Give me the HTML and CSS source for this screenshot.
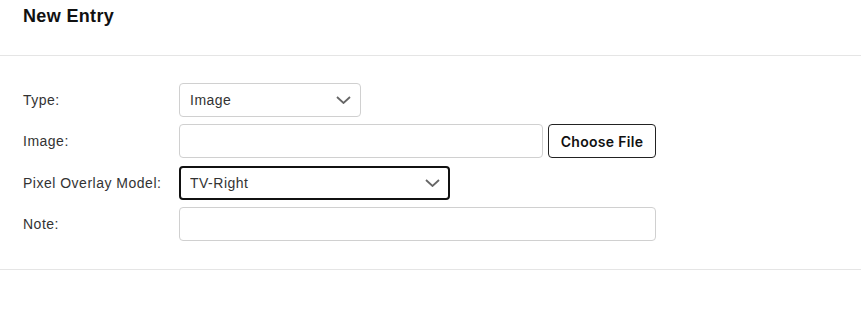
FILE: index.html
```html
<!DOCTYPE html>
<html lang="en">
<head>
    <meta charset="UTF-8">
    <meta name="viewport" content="width=device-width, initial-scale=1.0">
    <title>New Entry</title>
    <link rel="stylesheet" href="styles.css">
</head>
<body>
    <div class="modal">
        <div class="modal-header">
            <h4>New Entry</h4>
        </div>

        <div class="modal-body">
            <form class="entry-form">
                <label for="type">Type:</label>
                <div class="field">
                    <div class="select-wrap type-select">
                        <select id="type">
                            <option>Image</option>
                        </select>
                        <svg class="chevron" width="15" height="8" viewBox="0 0 15 8"><path d="M1 1 L7.5 7 L14 1" fill="none" stroke="#666" stroke-width="1.8"/></svg>
                    </div>
                </div>

                <label for="image">Image:</label>
                <div class="field">
                    <input type="text" id="image" class="text-input image-input">
                    <button type="button" class="file-btn">Choose File</button>
                </div>

                <label for="model">Pixel Overlay Model:</label>
                <div class="field">
                    <div class="select-wrap model-select">
                        <select id="model" class="focused">
                            <option>TV-Right</option>
                        </select>
                        <svg class="chevron" width="15" height="8" viewBox="0 0 15 8"><path d="M1 1 L7.5 7 L14 1" fill="none" stroke="#666" stroke-width="1.8"/></svg>
                    </div>
                </div>

                <label for="note">Note:</label>
                <div class="field">
                    <input type="text" id="note" class="text-input note-input">
                </div>
            </form>
        </div>

        <div class="modal-footer"></div>
    </div>
</body>
</html>
```

FILE: styles.css
```css
body {
    margin: 0;
    background-color: #fff;
    font-family: 'Liberation Sans', Arial, sans-serif;
    color: #333;
}

.modal-header {
    height: 55px;
    border-bottom: 1px solid #e5e5e5;
    padding: 0 23px;
}

.modal-header h4 {
    margin: 0;
    padding-top: 5px;
    font-size: 18px;
    line-height: 22px;
    font-weight: bold;
    letter-spacing: 0.35px;
    color: #111;
}

.modal-body {
    padding: 27px 22px 28px 23px;
}

.modal-footer {
    border-top: 1px solid #e5e5e5;
}

.entry-form {
    display: grid;
    grid-template-columns: 156px auto;
    row-gap: 7.34px;
    align-items: center;
}

.entry-form label {
    font-size: 14px;
    letter-spacing: 0.5px;
    color: #333;
}

.field {
    display: flex;
    align-items: center;
    gap: 5px;
    height: 34px;
}

.select-wrap {
    position: relative;
    height: 34px;
}

.type-select {
    width: 182px;
}

.model-select {
    width: 271px;
}

.select-wrap select {
    appearance: none;
    -webkit-appearance: none;
    width: 100%;
    height: 100%;
    box-sizing: border-box;
    border: 1px solid #d0d0d0;
    border-radius: 4px;
    background: #fff;
    padding: 0 10px;
    font-family: 'Liberation Sans', Arial, sans-serif;
    font-size: 14px;
    letter-spacing: 0.5px;
    color: #333;
    outline: none;
}

.select-wrap select.focused {
    border: 2px solid #111;
    padding: 0 9px;
}

.chevron {
    position: absolute;
    right: 10px;
    top: 13px;
    pointer-events: none;
}

.text-input {
    height: 34px;
    box-sizing: border-box;
    border: 1px solid #d0d0d0;
    border-radius: 4px;
    padding: 0 10px;
    font-size: 14px;
    outline: none;
}

.image-input {
    width: 364px;
}

.note-input {
    width: 477px;
}

.file-btn {
    width: 108px;
    height: 34px;
    box-sizing: border-box;
    border: 1px solid #222;
    border-radius: 4px;
    background: #fff;
    font-family: Inter, Roboto, sans-serif;
    font-size: 14px;
    font-weight: 600;
    letter-spacing: 0.3px;
    color: #111;
    padding: 0;
}
```
